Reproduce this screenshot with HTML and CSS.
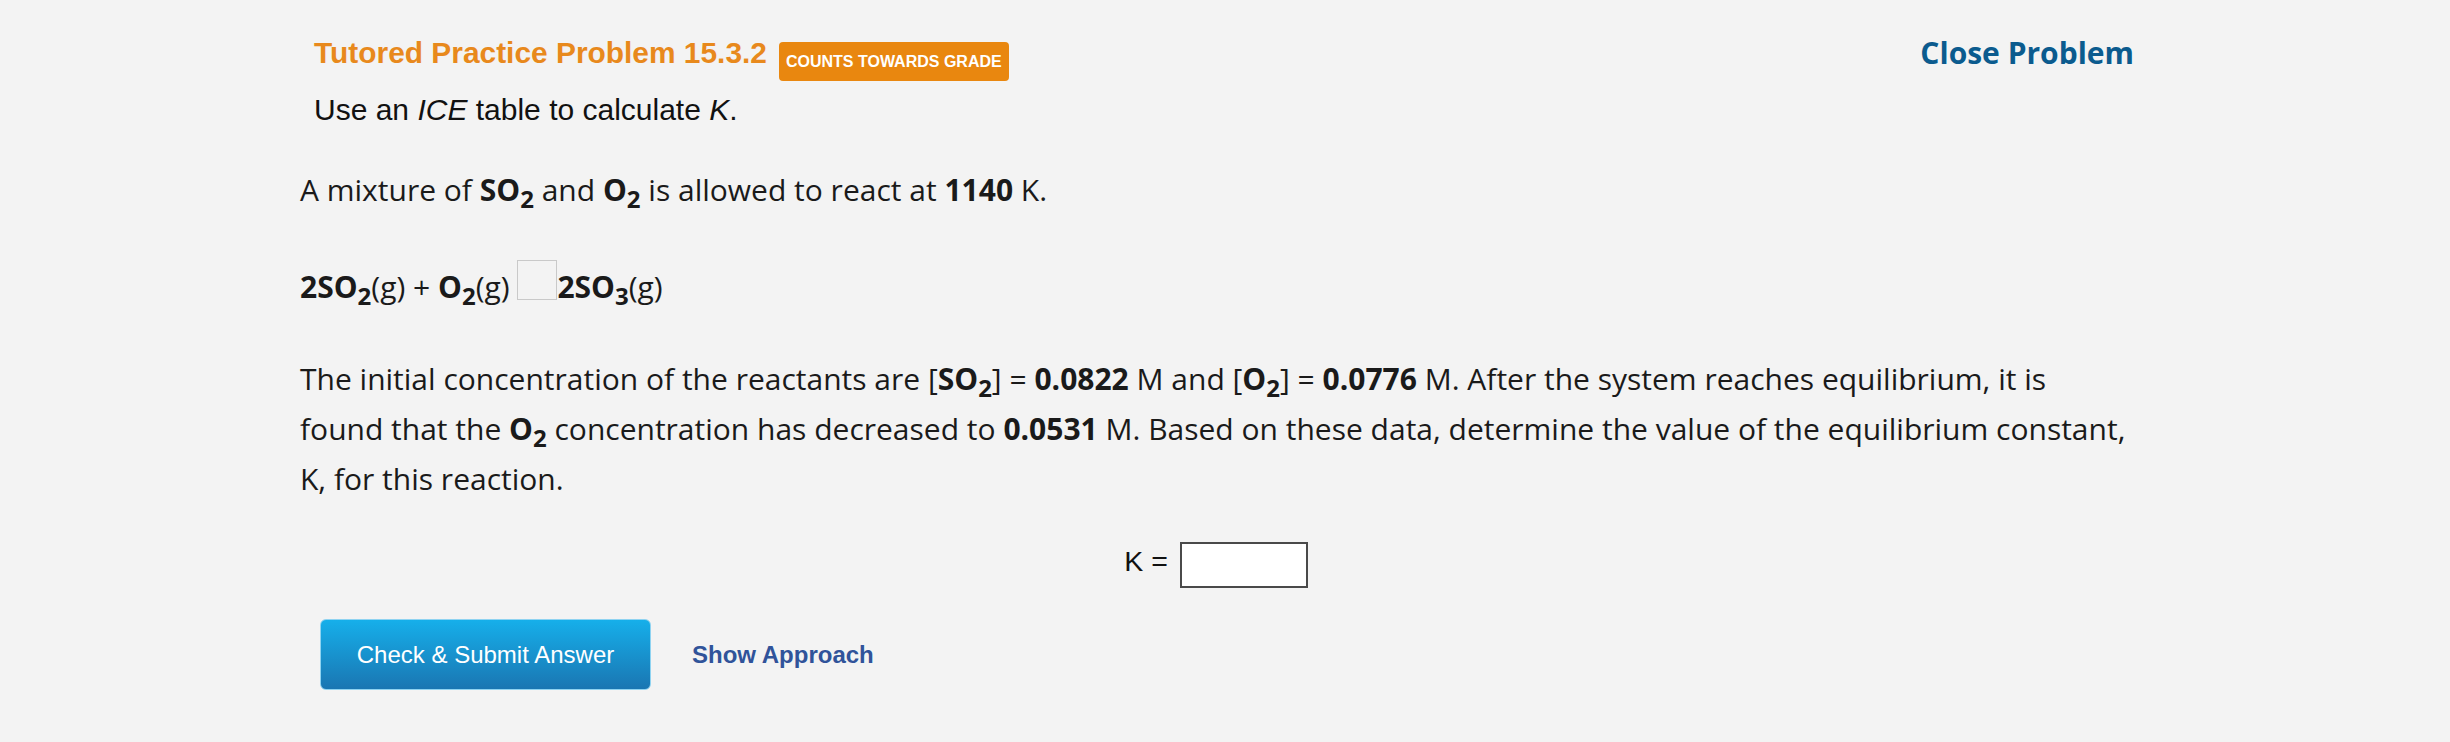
FILE: index.html
```html
<!DOCTYPE html>
<html lang="en">
<head>
<meta charset="utf-8">
<title>Tutored Practice Problem 15.3.2</title>
<link rel="stylesheet" href="styles.css">
</head>
<body>
<div class="page">
  <header class="head">
    <div class="title-group">
      <span class="title">Tutored Practice Problem 15.3.2</span>
      <span class="badge">COUNTS TOWARDS GRADE</span>
    </div>
    <a class="close" href="#">Close Problem</a>
  </header>
  <p class="instr">Use an <i>ICE</i> table to calculate <i>K</i>.</p>
  <div class="problem">
    <p class="intro">A mixture of <b>SO<sub>2</sub></b> and <b>O<sub>2</sub></b> is allowed to react at <b>1140</b> K.</p>
    <p class="eq"><b>2SO<sub>2</sub></b>(g) + <b>O<sub>2</sub></b>(g) <span class="arrowbox"></span><b>2SO<sub>3</sub></b>(g)</p>
    <p class="text">The initial concentration of the reactants are [<b>SO<sub>2</sub></b>] = <b>0.0822</b> M and [<b>O<sub>2</sub></b>] = <b>0.0776</b> M. After the system reaches equilibrium, it is found that the <b>O<sub>2</sub></b> concentration has decreased to <b>0.0531</b> M. Based on these data, determine the value of the equilibrium constant, K, for this reaction.</p>
    <div class="answer">
      <span class="klabel">K =</span>
      <span class="kinput"></span>
    </div>
  </div>
  <div class="actions">
    <button class="submit" type="button">Check &amp; Submit Answer</button>
    <a class="approach" href="#">Show Approach</a>
  </div>
</div>
</body>
</html>
```

FILE: styles.css
```css
html, body {
  margin: 0;
  padding: 0;
  background: #f3f3f3;
}

.page {
  width: 1840px;
  margin-left: 300px;
  padding-top: 36px;
  color: #1a1a1a;
}

.head {
  display: flex;
  justify-content: space-between;
  align-items: flex-start;
  padding-left: 14px;
  padding-right: 6px;
}

.title-group {
  display: flex;
  align-items: flex-start;
  gap: 12px;
}

.title {
  font-family: "Liberation Sans", Arial, sans-serif;
  font-weight: bold;
  font-size: 29.9px;
  line-height: 34px;
  color: #e8891c;
}

.badge {
  margin-top: 6px;
  height: 39px;
  line-height: 39px;
  padding: 0 7px;
  border-radius: 4px;
  background: #e9870f;
  color: #fff;
  font-family: "Liberation Sans", Arial, sans-serif;
  font-weight: bold;
  font-size: 16px;
}

.close {
  font-family: "Open Sans", sans-serif;
  font-weight: bold;
  font-size: 30px;
  line-height: 34px;
  color: #0b5b8e;
  text-decoration: none;
}

.instr {
  margin: 11px 0 0;
  padding-left: 14px;
  font-family: "Liberation Sans", Arial, sans-serif;
  font-size: 30px;
  line-height: 36px;
  color: #111;
}

.problem {
  font-family: "Open Sans", sans-serif;
  font-size: 30px;
  line-height: 50px;
  color: #1a1a1a;
}

.problem p {
  margin: 0;
}

.problem b {
  font-weight: bold;
}

.problem sub {
  font-size: 0.8em;
  line-height: 0;
  vertical-align: -0.3em;
}

.intro {
  margin-top: 37px !important;
}

.eq {
  margin-top: 45px !important;
}

.text {
  margin-top: 42px !important;
  max-width: 1834px;
}

.arrowbox {
  display: inline-block;
  width: 38px;
  height: 38px;
  border: 1px solid #c9c9c9;
  vertical-align: -2px;
}

.answer {
  display: flex;
  justify-content: center;
  align-items: flex-start;
  gap: 12px;
  margin-top: 38px;
  padding-right: 8px;
}

.klabel {
  font-family: "Liberation Sans", Arial, sans-serif;
  font-size: 28.5px;
  line-height: 34px;
  margin-top: 2px;
  color: #111;
}

.kinput {
  display: block;
  width: 124px;
  height: 42px;
  border: 2px solid #4a4a4a;
  background: #fff;
}

.actions {
  display: flex;
  align-items: center;
  gap: 41px;
  margin-top: 31px;
  padding-left: 20px;
}

.submit {
  width: 331px;
  height: 71px;
  border: 1px solid #8fd3f1;
  border-radius: 6px;
  background: linear-gradient(#16afea, #1a76b2);
  color: #fff;
  font-family: "Liberation Sans", Arial, sans-serif;
  font-size: 24px;
  padding: 0;
}

.approach {
  font-family: "Liberation Sans", Arial, sans-serif;
  font-weight: bold;
  font-size: 24px;
  color: #30539a;
  text-decoration: none;
}
```
